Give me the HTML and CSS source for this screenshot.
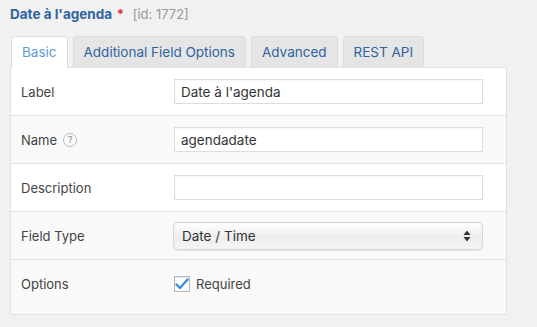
FILE: index.html
```html
<!DOCTYPE html>
<html lang="fr">
  <head>
    <meta charset="UTF-8" />
    <title>Date à l'agenda</title>
    <link rel="stylesheet" href="styles.css">
  </head>
  <body>
    <div class="field-head">
      <span class="field-name">Date à l'agenda</span>
      <span class="req">*</span>
      <span class="field-id">[id: 1772]</span>
    </div>

    <div class="tabs">
      <div class="tab active">Basic</div>
      <div class="tab">Additional Field Options</div>
      <div class="tab">Advanced</div>
      <div class="tab">REST API</div>
    </div>

    <div class="panel">
      <div class="row">
        <div class="row-label">Label</div>
        <div class="row-field"><input class="text-input" type="text" value="Date à l'agenda"></div>
      </div>
      <div class="row alt">
        <div class="row-label">Name <span class="help">?</span></div>
        <div class="row-field"><input class="text-input" type="text" value="agendadate"></div>
      </div>
      <div class="row">
        <div class="row-label">Description</div>
        <div class="row-field"><input class="text-input" type="text" value=""></div>
      </div>
      <div class="row alt">
        <div class="row-label">Field Type</div>
        <div class="row-field">
          <div class="select">
            <span>Date / Time</span>
            <svg class="arrows" width="8" height="12" viewBox="0 0 8 12">
              <path d="M4 0.5 L7.5 5 L0.5 5 Z" fill="#333"/>
              <path d="M4 11.5 L7.5 7 L0.5 7 Z" fill="#333"/>
            </svg>
          </div>
        </div>
      </div>
      <div class="row alt last">
        <div class="row-label">Options</div>
        <div class="row-field">
          <label class="check">
            <span class="box">
              <svg width="14" height="12" viewBox="0 0 14 12">
                <path d="M1.5 6.5 L5 10 L12.5 1.5" fill="none" stroke="#3f8fd6" stroke-width="2.4" stroke-linecap="round" stroke-linejoin="round"/>
              </svg>
            </span>
            Required
          </label>
        </div>
      </div>
    </div>
  </body>
</html>
```

FILE: styles.css
```css
* {
  margin: 0;
  padding: 0;
  box-sizing: border-box;
}

body {
  font-family: Inter, "Open Sans", "Liberation Sans", sans-serif;
  font-size: 13px;
  background: #f1f1f1;
  color: #444;
  width: 537px;
  height: 327px;
  padding: 4px 10px 0 10px;
  overflow: hidden;
}

/* Field heading */
.field-head {
  height: 20px;
  line-height: 20px;
}

.field-name {
  font-size: 13.5px;
  font-weight: 700;
  color: #2f64a0;
}

.req {
  color: #dc3232;
  font-weight: 700;
  margin-left: 1px;
}

.field-id {
  color: #999;
  margin-left: 5px;
}

/* Tabs */
.tabs {
  display: flex;
  gap: 5px;
  margin-top: 12px;
  padding-left: 1px;
}

.tab {
  height: 31px;
  line-height: 30px;
  padding: 0 10px;
  font-size: 13.5px;
  color: #2f64a0;
  background: #e5e5e5;
  border: 1px solid #dcdcdc;
  border-bottom: none;
  border-radius: 4px 4px 0 0;
}

.tab.active {
  background: #fff;
  color: #5b9dd9;
  position: relative;
  z-index: 2;
  height: 32px;
  margin-bottom: -1px;
}

/* Panel */
.panel {
  width: 497px;
  background: #fff;
  border: 1px solid #e1e1e1;
}

.row {
  display: flex;
  align-items: center;
  height: 48px;
  border-bottom: 1px solid #e1e1e1;
  background: #fff;
}

.row.alt {
  background: #f9f9f9;
}

.row.last {
  height: 54px;
  border-bottom: none;
  padding-bottom: 6px;
}

.row-label {
  width: 163px;
  padding-left: 10px;
  color: #444;
  display: flex;
  align-items: center;
  gap: 6px;
}

.help {
  display: inline-block;
  width: 14px;
  height: 14px;
  border: 1px solid #bbb;
  border-radius: 50%;
  font-size: 9.5px;
  line-height: 12px;
  text-align: center;
  color: #888;
  background: #fbfbfb;
}

.row-field {
  flex: 1;
}

.text-input {
  display: block;
  width: 309px;
  height: 25px;
  border: 1px solid #ddd;
  background: #fff;
  padding: 0 6px;
  font-family: inherit;
  font-size: 13.5px;
  color: #333;
  outline: none;
  box-shadow: inset 0 1px 2px rgba(0, 0, 0, 0.04);
}

.select {
  display: flex;
  align-items: center;
  justify-content: space-between;
  width: 310px;
  height: 28px;
  margin-left: -1px;
  padding: 0 11px 0 8px;
  font-size: 13.5px;
  color: #333;
  border: 1px solid #d4d4d4;
  border-radius: 5px;
  background: linear-gradient(#ffffff, #ededed 55%, #f6f6f6);
  box-shadow: 0 1px 1px rgba(0, 0, 0, 0.08);
}

.check {
  display: flex;
  align-items: center;
  gap: 6px;
  font-size: 13px;
  color: #444;
}

.box {
  width: 16px;
  height: 16px;
  border: 1px solid #b4b9be;
  background: #fff;
  display: flex;
  align-items: center;
  justify-content: center;
  box-shadow: inset 0 1px 2px rgba(0, 0, 0, 0.1);
}
```
